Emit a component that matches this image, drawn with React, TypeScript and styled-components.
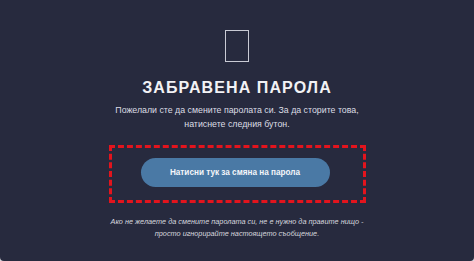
import React from "react";
import styled, { createGlobalStyle } from "styled-components";

const Global = createGlobalStyle`
  html, body { margin: 0; padding: 0; background: #d9d9de; }
  body { font-family: "Liberation Sans", Arial, sans-serif; }
`;

const Page = styled.div`
  width: 474px;
  height: 261px;
  box-sizing: border-box;
  background: #272a3e;
  border-radius: 0 0 4px 4px;
  display: flex;
  flex-direction: column;
  align-items: center;
  padding-top: 30px;
`;

const Placeholder = styled.div`
  width: 24px;
  height: 32px;
  box-sizing: border-box;
  border: 1.5px solid #c9cad4;
`;

const Title = styled.h1`
  margin: 16px 0 0;
  font-size: 16px;
  line-height: 20px;
  font-weight: 700;
  letter-spacing: 1.1px;
  color: #f2f2f5;
`;

const Lead = styled.p`
  margin: 5px 0 0;
  font-size: 8.8px;
  line-height: 14px;
  color: #dcdde4;
  text-align: center;
  white-space: nowrap;
`;

const Highlight = styled.div`
  margin-top: 14px;
  width: 257px;
  height: 58px;
  box-sizing: border-box;
  border: 3px dashed #e3141d;
  display: flex;
  align-items: flex-start;
  padding: 10px 0 0 29px;
`;

const Button = styled.button`
  width: 189px;
  height: 29px;
  border: none;
  border-radius: 15px;
  background: #4a79a5;
  color: #f4f6fa;
  font-family: "Liberation Sans", Arial, sans-serif;
  font-weight: 700;
  font-size: 8.2px;
  padding: 0;
  cursor: pointer;
`;

const Note = styled.p`
  margin: 13px 0 0;
  font-size: 7.3px;
  line-height: 12px;
  font-style: italic;
  color: #d6d7de;
  text-align: center;
  white-space: nowrap;
`;

export default function App() {
  return (
    <>
      <Global />
      <Page>
        <Placeholder />
        <Title>ЗАБРАВЕНА ПАРОЛА</Title>
        <Lead>
          Пожелали сте да смените паролата си. За да сторите това,
          <br />
          натиснете следния бутон.
        </Lead>
        <Highlight>
          <Button>Натисни тук за смяна на парола</Button>
        </Highlight>
        <Note>
          Ако не желаете да смените паролата си, не е нужно да правите нищо -
          <br />
          просто игнорирайте настоящето съобщение.
        </Note>
      </Page>
    </>
  );
}
